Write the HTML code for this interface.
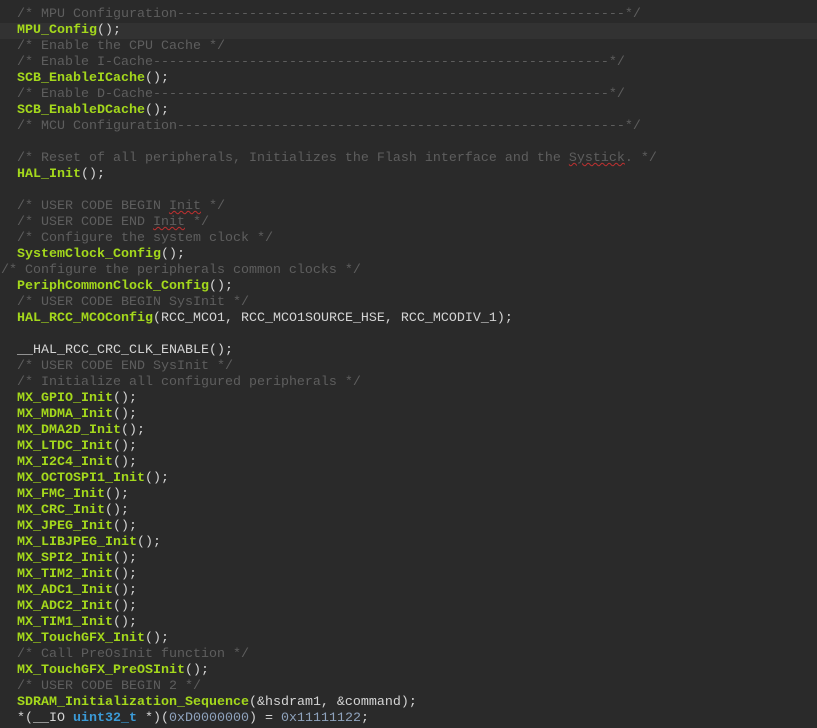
<!DOCTYPE html><html><head><style>
body{margin:0;background:#2a2a2a;width:817px;height:728px;overflow:hidden}
pre{margin:0;position:absolute;top:7px;left:1px;font:13.33px/16px "Liberation Mono",monospace;color:#d4d4d4}
.c{color:#5e5e5e}.f{color:#a4d81c;font-weight:bold}.t{color:#3b9ad6;font-weight:bold}.n{color:#8fa3bd}
.hl{position:absolute;top:23px;left:0;width:817px;height:16px;background:#323232}
.u{text-decoration:underline wavy #c03030;text-decoration-thickness:1px}
</style></head><body><div class="hl"></div><pre>  <span class="c">/* MPU Configuration--------------------------------------------------------*/</span>
  <span class="f">MPU_Config</span>();
  <span class="c">/* Enable the CPU Cache */</span>
  <span class="c">/* Enable I-Cache---------------------------------------------------------*/</span>
  <span class="f">SCB_EnableICache</span>();
  <span class="c">/* Enable D-Cache---------------------------------------------------------*/</span>
  <span class="f">SCB_EnableDCache</span>();
  <span class="c">/* MCU Configuration--------------------------------------------------------*/</span>

  <span class="c">/* Reset of all peripherals, Initializes the Flash interface and the <span class="u">Systick</span>. */</span>
  <span class="f">HAL_Init</span>();

  <span class="c">/* USER CODE BEGIN <span class="u">Init</span> */</span>
  <span class="c">/* USER CODE END <span class="u">Init</span> */</span>
  <span class="c">/* Configure the system clock */</span>
  <span class="f">SystemClock_Config</span>();
<span class="c">/* Configure the peripherals common clocks */</span>
  <span class="f">PeriphCommonClock_Config</span>();
  <span class="c">/* USER CODE BEGIN SysInit */</span>
  <span class="f">HAL_RCC_MCOConfig</span>(RCC_MCO1, RCC_MCO1SOURCE_HSE, RCC_MCODIV_1);

  __HAL_RCC_CRC_CLK_ENABLE();
  <span class="c">/* USER CODE END SysInit */</span>
  <span class="c">/* Initialize all configured peripherals */</span>
  <span class="f">MX_GPIO_Init</span>();
  <span class="f">MX_MDMA_Init</span>();
  <span class="f">MX_DMA2D_Init</span>();
  <span class="f">MX_LTDC_Init</span>();
  <span class="f">MX_I2C4_Init</span>();
  <span class="f">MX_OCTOSPI1_Init</span>();
  <span class="f">MX_FMC_Init</span>();
  <span class="f">MX_CRC_Init</span>();
  <span class="f">MX_JPEG_Init</span>();
  <span class="f">MX_LIBJPEG_Init</span>();
  <span class="f">MX_SPI2_Init</span>();
  <span class="f">MX_TIM2_Init</span>();
  <span class="f">MX_ADC1_Init</span>();
  <span class="f">MX_ADC2_Init</span>();
  <span class="f">MX_TIM1_Init</span>();
  <span class="f">MX_TouchGFX_Init</span>();
  <span class="c">/* Call PreOsInit function */</span>
  <span class="f">MX_TouchGFX_PreOSInit</span>();
  <span class="c">/* USER CODE BEGIN 2 */</span>
  <span class="f">SDRAM_Initialization_Sequence</span>(&amp;hsdram1, &amp;command);
  *(__IO <span class="t">uint32_t</span> *)(<span class="n">0xD0000000</span>) = <span class="n">0x11111122</span>;
</pre></body></html>
